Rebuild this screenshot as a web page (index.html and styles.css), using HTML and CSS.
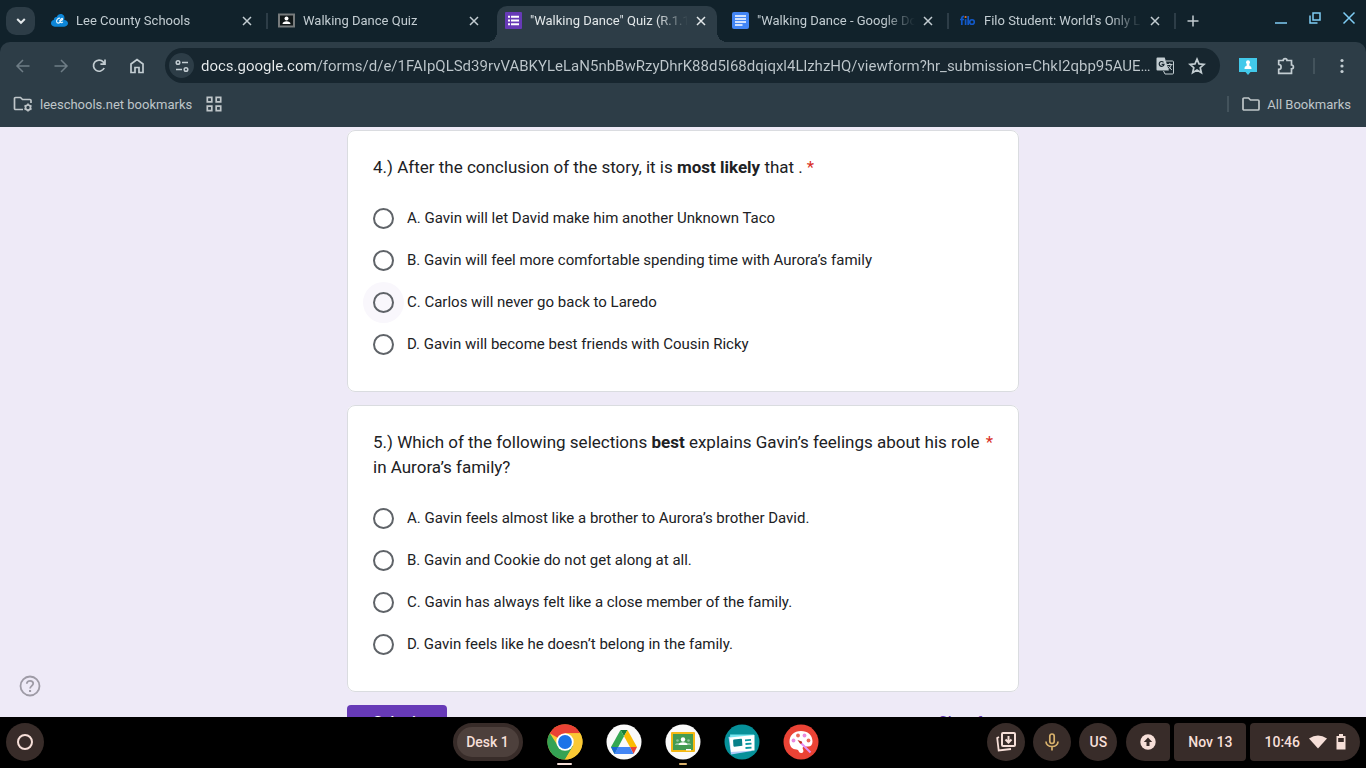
FILE: index.html
```html
<!DOCTYPE html>
<html lang="en">
<head>
<meta charset="utf-8">
<title>"Walking Dance" Quiz (R.1.1)</title>
<link rel="stylesheet" href="styles.css">
</head>
<body>
<header class="browser">
  <div class="tabstrip">
    <button class="tab-search" aria-label="Search tabs"><svg width="12" height="12" viewBox="0 0 12 12"><path d="M2.2 4 6 7.8 9.8 4" class="line bold"/></svg></button>
    <nav class="tabs">
      <div class="tab divided">
        <svg class="favicon" viewBox="0 0 18 18"><path d="M4 15.500C1.500 15.500 0 14 0 12c0-2 1.300-3.300 3-3.500C2.800 6.500 4 5 6 5.200 7 2.500 10 1.300 12.300 2.600c1.700 1 2.200 2.600 1.900 4.200l-.2 1.700c2.300.2 4 1.500 4 3.500s-1.500 3.500-4 3.500z" fill="#0d86d8"/><path d="M9.500 6.500C7 6.500 5.500 8.500 6 10.500c.5 1.800 2.600 1.600 3.500.2M8.500 9.500c2 0 4-1 3.800-2.300-.3-1.300-2.500.3-2.400 2.600.1 2 1.900 1.700 2.600.5" fill="none" stroke="#e4f5ff" stroke-width="1.300"/></svg>
        <a class="tab-title" href="#">Lee County Schools</a>
        <button class="tab-close" aria-label="Close tab"><svg viewBox="0 0 10 10"><path d="M1 1l8 8M9 1 1 9" class="line"/></svg></button>
      </div>
      <div class="tab">
        <svg class="favicon" viewBox="0 0 17 17"><path d="M0 1.500h17v14H0z" fill="#777b7c"/><path d="M2 3.500h13v10H2z" fill="#111718"/><circle cx="8.500" cy="6.500" r="2" fill="#fff"/><path d="M4.500 12c0-2 2-2.800 4-2.800s4 .8 4 2.800z" fill="#fff"/></svg>
        <a class="tab-title" href="#">Walking Dance Quiz</a>
        <button class="tab-close" aria-label="Close tab"><svg viewBox="0 0 10 10"><path d="M1 1l8 8M9 1 1 9" class="line"/></svg></button>
      </div>
      <div class="tab active">
        <svg class="favicon" viewBox="0 0 17 17"><rect width="17" height="17" rx="1" fill="#673ab7"/><path d="M6 4.800h8M6 8.500h8M6 12.200h8" stroke="#fff" stroke-width="2"/><path d="M3 4.800h2M3 8.500h2M3 12.200h2" stroke="#fff" stroke-width="2"/></svg>
        <a class="tab-title" href="#">"Walking Dance" Quiz (R.1.1</a>
        <button class="tab-close" aria-label="Close tab"><svg viewBox="0 0 10 10"><path d="M1 1l8 8M9 1 1 9" class="line"/></svg></button>
      </div>
      <div class="tab divided">
        <svg class="favicon" viewBox="0 0 17 17"><rect width="17" height="17" rx="2" fill="#4285f4"/><path d="M3 4h11M3 7h11M3 10h11M3 13h7.500" stroke="#fff" stroke-width="1.600"/></svg>
        <a class="tab-title" href="#">"Walking Dance - Google Do</a>
        <button class="tab-close" aria-label="Close tab"><svg viewBox="0 0 10 10"><path d="M1 1l8 8M9 1 1 9" class="line"/></svg></button>
      </div>
      <div class="tab divided">
        <svg class="favicon" viewBox="0 0 17 17"><path d="M2.800 13V6.500c0-1.500.7-2.200 2.200-2.200M1 7.500h4M6.600 7.200V13M9.200 4v9" fill="none" stroke="#1259c9" stroke-width="1.700"/><circle cx="13" cy="10" r="2.300" fill="none" stroke="#1259c9" stroke-width="1.600"/><circle cx="6.600" cy="5" r="1.100" fill="#e8792b"/></svg>
        <a class="tab-title" href="#">Filo Student: World's Only L</a>
        <button class="tab-close" aria-label="Close tab"><svg viewBox="0 0 10 10"><path d="M1 1l8 8M9 1 1 9" class="line"/></svg></button>
      </div>
    </nav>
    <button class="new-tab" aria-label="New tab"><svg width="12" height="12" viewBox="0 0 12 12"><path d="M6 .5v11M.5 6h11" class="line"/></svg></button>
    <div class="window-controls">
      <button aria-label="Minimize"><svg width="14" height="14" viewBox="0 0 14 14"><path d="M1 12h12" class="line"/></svg></button>
      <button aria-label="Restore"><svg width="14" height="14" viewBox="0 0 14 14"><path d="M5 2h7v7H5zM2 4.500V12h7.500" class="line"/></svg></button>
      <button aria-label="Close"><svg width="14" height="14" viewBox="0 0 14 14"><path d="M1.500 1.500l11 11M12.500 1.500l-11 11" class="line"/></svg></button>
    </div>
  </div>

  <div class="chrome-body">
    <div class="toolbar">
      <button class="tool dim" aria-label="Back"><svg width="16" height="16" viewBox="0 0 16 16"><path d="M14.500 8H2M8 2 2 8l6 6" class="line"/></svg></button>
      <button class="tool dim" aria-label="Forward"><svg width="16" height="16" viewBox="0 0 16 16"><path d="M1.500 8H14M8 2l6 6-6 6" class="line"/></svg></button>
      <button class="tool" aria-label="Reload"><svg width="16" height="16" viewBox="0 0 16 16"><path d="M13.200 10a5.600 5.600 0 1 1-1-6.200L14 5.600M14 1.500v4.600H9.400" class="line mid"/></svg></button>
      <button class="tool" aria-label="Home"><svg width="16" height="16" viewBox="0 0 16 16"><path d="M2 14.500V6l6-4.500L14 6v8.500h-4V9.500H6v5z" class="line mid"/></svg></button>
      <div class="omnibox">
        <button class="site-info" aria-label="View site information"><svg width="14" height="14" viewBox="0 0 14 14"><circle cx="3" cy="3.500" r="1.800" class="line"/><circle cx="11" cy="10.500" r="1.800" class="line"/><path d="M7 3.500h6M1 10.500h6" class="line"/></svg></button>
        <input class="url" type="text" aria-label="Address" value="docs.google.com/forms/d/e/1FAIpQLSd39rvVABKYLeLaN5nbBwRzyDhrK88d5I68dqiqxl4LlzhzHQ/viewform?hr_submission=ChkI2qbp95AUE…">
        <button class="omni-action" aria-label="Translate"><svg width="18" height="18" viewBox="0 0 18 18"><path d="M1.500.5h7.200l4.200 13H1.500A1 1 0 0 1 .5 12.500v-11a1 1 0 0 1 1-1z" fill="#c3cdd2"/><path d="M7.500 5.400A2.400 2.400 0 1 0 8 7.300H5.600" fill="none" stroke="#17262f" stroke-width="1.200"/><path d="M10 4h6.500a1 1 0 0 1 1 1v11a1 1 0 0 1-1 1H9l-1.500-3" fill="none" stroke="#c3cdd2"/><path d="M11 7.500h5.500M13.800 6v1.500M15.300 7.500c-.5 2.500-2 4-3.700 5M12.300 9l3.500 4" fill="none" stroke="#c3cdd2"/></svg></button>
        <button class="omni-action" aria-label="Bookmark this tab"><svg width="18" height="18" viewBox="0 0 18 18"><path d="M9 2.200l2 4.700 5 .5-3.800 3.300 1.200 5L9 13l-4.400 2.700 1.200-5L2 7.400l5-.5z" class="line mid"/></svg></button>
      </div>
      <button class="tool" aria-label="Classroom extension"><svg width="18" height="18" viewBox="0 0 18 18"><path d="M0 1h18v14h-6.500L9 18l-2.500-3H0z" fill="#42c9ea"/><circle cx="9" cy="5.300" r="2" fill="#fff"/><path d="M7.800 6.500h2.400l.3 2.500c1.500.3 2 1 2 3h-7c0-2 .5-2.700 2-3z" fill="#fff"/></svg></button>
      <button class="tool" aria-label="Extensions"><svg width="18" height="18" viewBox="0 0 18 18"><path d="M1.700 3.500h4.500a1.900 1.900 0 0 1 3.800 0h4.500V8a1.900 1.900 0 0 1 0 3.800v4.500H1.700v-4a2.300 2.300 0 0 0 0-4.800z" class="line mid"/></svg></button>
      <span class="rule"></span>
      <button class="tool" aria-label="Menu"><svg width="16" height="16" viewBox="0 0 16 16"><g fill="currentColor"><circle cx="8" cy="2.500" r="1.600"/><circle cx="8" cy="8" r="1.600"/><circle cx="8" cy="13.500" r="1.600"/></g></svg></button>
    </div>
    <div class="bookmarks">
      <button class="bookmark"><svg width="20" height="18" viewBox="0 0 20 18"><path d="M10 14.500H2.500a1 1 0 0 1-1-1v-10a1 1 0 0 1 1-1h5l2 2H17a1 1 0 0 1 1 1V8" class="line mid"/><circle cx="15" cy="12.500" r="2.500" class="line mid"/><path d="M15 8.500V10M15 15v1.500M11.500 10.500l1.300.8M17.200 13.700l1.300.8M11.500 14.500l1.300-.8M17.200 11.300l1.300-.8" class="line mid"/></svg>leeschools.net bookmarks</button>
      <button class="bookmark" aria-label="Apps"><svg width="16" height="16" viewBox="0 0 16 16"><path d="M1.300 1.300h4.500v4.500H1.300zM10.200 1.300h4.500v4.500h-4.500zM1.300 10.200h4.500v4.500H1.300zM10.200 10.200h4.500v4.500h-4.500z" class="line mid"/></svg></button>
      <span class="rule push"></span>
      <button class="bookmark"><svg width="18" height="14" viewBox="0 0 18 14"><path d="M1 2a1 1 0 0 1 1-1h4.500l2 2H16a1 1 0 0 1 1 1v8a1 1 0 0 1-1 1H2a1 1 0 0 1-1-1z" class="line mid"/></svg>All Bookmarks</button>
    </div>
  </div>
</header>

<main class="page">
  <form class="quiz">
    <fieldset class="card" aria-labelledby="q4">
      <div class="question" id="q4"><span>4.) After the conclusion of the story, it is <b>most likely</b> that .</span><span class="required">*</span></div>
      <label class="option"><input type="radio" name="q4">A. Gavin will let David make him another Unknown Taco</label>
      <label class="option"><input type="radio" name="q4">B. Gavin will feel more comfortable spending time with Aurora’s family</label>
      <label class="option"><input type="radio" name="q4" class="hovered">C. Carlos will never go back to Laredo</label>
      <label class="option"><input type="radio" name="q4">D. Gavin will become best friends with Cousin Ricky</label>
    </fieldset>
    <fieldset class="card" aria-labelledby="q5">
      <div class="question" id="q5"><span>5.) Which of the following selections <b>best</b> explains Gavin’s feelings about his role in Aurora’s family?</span><span class="required">*</span></div>
      <label class="option"><input type="radio" name="q5">A. Gavin feels almost like a brother to Aurora’s brother David.</label>
      <label class="option"><input type="radio" name="q5">B. Gavin and Cookie do not get along at all.</label>
      <label class="option"><input type="radio" name="q5">C. Gavin has always felt like a close member of the family.</label>
      <label class="option"><input type="radio" name="q5">D. Gavin feels like he doesn’t belong in the family.</label>
    </fieldset>
    <div class="actions">
      <button type="button" class="submit">Submit</button>
      <button type="reset" class="clear">Clear form</button>
    </div>
  </form>
  <button class="help" aria-label="Help"><svg width="22" height="22" viewBox="0 0 22 22"><circle cx="11" cy="11" r="9.500" fill="none" stroke="currentColor" stroke-width="1.800"/><path d="M7.800 8.800c0-1.900 1.400-3 3.200-3s3.200 1.200 3.200 2.800c0 2.200-3.100 2.500-3.100 5" fill="none" stroke="currentColor" stroke-width="1.800"/><path d="M10 15h2.100v2H10z" fill="currentColor"/></svg></button>
</main>

<footer class="shelf">
  <div class="shelf-side">
    <button class="round" aria-label="Launcher"><svg width="18" height="18" viewBox="0 0 18 18"><circle cx="9" cy="9" r="7" fill="none" stroke="currentColor" stroke-width="2"/></svg></button>
  </div>
  <button class="desk">Desk 1</button>
  <nav class="apps">
    <button class="app running" aria-label="Chrome"><svg viewBox="0 0 36 36"><circle cx="18" cy="18" r="17.500" fill="#fbc934"/><path d="M18 18 2.800 9.200A17.500 17.500 0 0 1 33.200 9.200L18 9.500z" fill="#e94235"/><path d="M2.800 9.200A17.500 17.500 0 0 0 18 35.500l8-13.300L18 18l-7 4z" fill="#34a253"/><path d="M18 9.300h15.200A17.500 17.500 0 0 1 18 35.500l8-13.200z" fill="#fbc934"/><circle cx="18" cy="18" r="8.700" fill="#fff"/><circle cx="18" cy="18" r="6.900" fill="#1a73e8"/></svg></button>
    <button class="app" aria-label="Drive"><svg viewBox="0 0 36 36"><circle cx="18" cy="18" r="17.500" fill="#fafafa"/><path d="M14.500 6h7L18 12.300z" fill="#188038"/><path d="M14.500 6 18 12.300 8.500 30 5 23z" fill="#34a853"/><path d="M21.500 6 31 23h-7L18 12.300z" fill="#fbbc04"/><path d="M24 23h7l-3.500 7z" fill="#ea4335"/><path d="M12 23h12l3.500 7h-19z" fill="#4285f4"/><path d="M5 23h7l-3.500 7z" fill="#1967d2"/></svg></button>
    <button class="app idle" aria-label="Classroom"><svg viewBox="0 0 36 36"><circle cx="18" cy="18" r="17.500" fill="#fafafa"/><rect x="6" y="8" width="24" height="20" rx="1" fill="#f5b914"/><path d="M8 10h20v16H8z" fill="#449b52"/><g fill="#8fc39a"><circle cx="12.500" cy="16.500" r="1.300"/><circle cx="23.500" cy="16.500" r="1.300"/><path d="M10 21c0-1.500 1.500-2 3-2h10c1.500 0 3 .5 3 2z"/></g><circle cx="18" cy="15.500" r="2.200" fill="#fff"/><path d="M13.500 21c0-2 2.500-2.700 4.500-2.700s4.500.7 4.500 2.700zM21 25h5v1.500h-5z" fill="#fff"/></svg></button>
    <button class="app" aria-label="Screencast"><svg viewBox="0 0 36 36"><circle cx="18" cy="18" r="17.500" fill="#069099"/><path d="m4.500 13 4-1L28 27 7 30.500z" fill="#aecbfa"/><path d="M6 10.500h24v10L7 24z" fill="#76e5ef"/><path d="m5.500 13.500 25-2.500v15.500L7 28z" fill="#fff"/><path d="M10 15.500l7-.8c.7 0 1 .3 1 1l.4 6-8 1c-.6 0-.9-.3-1-1l-.3-5c0-.7.3-1.100.9-1.200z" fill="#07818a"/><path d="m21 16.300 6-.4M21.500 20l6-.4M21.500 24l6-.4" stroke="#0a98a2" stroke-width="1.800"/></svg></button>
    <button class="app" aria-label="Canvas"><svg viewBox="0 0 36 36"><circle cx="18" cy="18" r="17.500" fill="#ea4335"/><path d="M18 7C11 7 6.500 11.500 6.500 17.500c0 5 3 8 7 8 2.500 0 2 3.500 4.500 3.500s3-2 1.800-4c-.6-1.500.2-2.500 2-2.500h3.200c3 0 4.500-2 4.500-5C29.500 11 24.500 7 18 7z" fill="#fff"/><g fill="#e98add"><circle cx="10.500" cy="16.500" r="1.900"/><circle cx="21.500" cy="11.500" r="1.900"/></g><g fill="#ea6a5c"><circle cx="15" cy="11.500" r="1.900"/><circle cx="25.500" cy="16.500" r="1.900"/></g><path d="m18 19 9.500 9.500" stroke="#e48df2" stroke-width="2"/><path d="m14.500 16 4.300 1.500c1 1.500-.5 2.700-1.800 2z" fill="#c52d25"/></svg></button>
  </nav>
  <div class="shelf-side tray">
    <div class="rounds">
      <button class="round" aria-label="Tote"><svg width="20" height="20" viewBox="0 0 20 20"><rect x="6" y="1" width="13" height="13" rx="1" fill="none" stroke="currentColor" stroke-width="2"/><path d="M12.500 4v6M9.500 7.500l3 3 3-3" fill="none" stroke="currentColor" stroke-width="2"/><path d="M3 5 1.200 6l1.500 12.500L15 17" fill="none" stroke="currentColor" stroke-width="1.800"/></svg></button>
      <button class="round mic" aria-label="Dictation"><svg width="20" height="20" viewBox="0 0 20 20"><rect x="7.800" y="2" width="4.400" height="9.500" rx="2.200" fill="none" stroke="currentColor" stroke-width="1.700"/><path d="M4 9.500c0 3 2.500 5 6 5s6-2 6-5M10 14.500V18.500" fill="none" stroke="currentColor" stroke-width="1.700"/></svg></button>
      <button class="round">US</button>
    </div>
    <div class="status">
      <button class="pill first" aria-label="Update"><svg width="16" height="16" viewBox="0 0 16 16"><circle cx="8" cy="8" r="7.700" fill="currentColor"/><path d="M8 3.500 3.800 8h2.700v4h3V8h2.700z" fill="#382c29"/></svg></button>
      <button class="pill">Nov 13</button>
      <button class="pill last">10:46<svg width="18" height="14" viewBox="0 0 18 14"><path d="M0 3.500Q9-2.500 18 3.500L9 13.500z" fill="currentColor"/></svg><svg width="10" height="16" viewBox="0 0 10 16"><path fill-rule="evenodd" d="M3 0h4v2h2.500v13.500h-9V2H3zM2.200 4v4h5.600V4z" fill="currentColor"/></svg></button>
    </div>
  </div>
</footer>
</body>
</html>
```
FILE: styles.css
```css
* { box-sizing: border-box; }

body {
  margin: 0;
  height: 100vh;
  display: flex;
  flex-direction: column;
  overflow: hidden;
  background: #000;
  font-family: Roboto, "Liberation Sans", sans-serif;
}

button {
  border: 0;
  padding: 0;
  background: none;
  color: inherit;
  font: inherit;
  display: inline-flex;
  align-items: center;
  justify-content: center;
  flex: none;
}

svg { display: block; flex: none; }

.line { fill: none; stroke: currentColor; stroke-width: 1.5; }
.line.mid { stroke-width: 1.7; }
.line.bold { stroke-width: 2; }

/* Browser frame */
.browser { background: #11222b; color: #c3cdd2; font-size: 13px; }

.tabstrip { display: flex; align-items: center; height: 42px; padding: 0 10px 0 6px; }

.tab-search { width: 29px; height: 28px; border-radius: 10px; background: #2d3d47; color: #e3e8ea; }

.tabs { display: flex; gap: 7px; margin-left: 8px; align-self: stretch; min-width: 0; }

.tab {
  position: relative;
  display: flex;
  align-items: center;
  flex: 0 1 220px;
  width: 220px;
  min-width: 0;
  margin-top: 6px;
  padding: 0 8px 7px 8px;
}

.tab.divided::after {
  content: "";
  position: absolute;
  right: -5px;
  top: 7px;
  width: 2px;
  height: 16px;
  background: #2d3d47;
}

.tab.active { background: #2d3d47; border-radius: 10px 10px 0 0; color: #e3e8ea; }

.tab.active::before {
  content: "";
  position: absolute;
  bottom: 0;
  left: -10px;
  right: -10px;
  height: 10px;
  background:
    radial-gradient(circle at 0 0, transparent 10px, #2d3d47 10px) left / 10px 10px no-repeat,
    radial-gradient(circle at 100% 0, transparent 10px, #2d3d47 10px) right / 10px 10px no-repeat;
}

.favicon { width: 17px; height: 17px; }

.tab-title {
  flex: 1;
  min-width: 0;
  margin: 0 5px 0 8px;
  overflow: hidden;
  white-space: nowrap;
  color: inherit;
  text-decoration: none;
  mask-image: linear-gradient(to right, #000 calc(100% - 32px), transparent);
}

.tab-close { width: 16px; height: 16px; }
.tab-close svg { width: 10px; height: 10px; }

.new-tab { width: 28px; height: 28px; margin-left: 8px; }

.window-controls { display: flex; gap: 20px; margin: 0 0 6px auto; color: #7fcdf5; }

.chrome-body { background: #2d3d47; border-radius: 10px 10px 0 0; }

.toolbar { display: flex; align-items: center; height: 47px; padding: 0 14px 0 13px; gap: 18px; }

.tool { width: 20px; height: 28px; }
.tool.dim { color: #6e7d86; }

.omnibox {
  flex: 1;
  min-width: 0;
  display: flex;
  align-items: center;
  height: 35px;
  padding: 0 14px 0 4px;
  border-radius: 18px;
  background: #17262f;
}

.site-info { width: 25px; height: 25px; border-radius: 50%; background: #2d3d47; }

.url {
  flex: 1;
  min-width: 0;
  margin: 0 4px 0 7px;
  padding: 0;
  border: 0;
  outline: 0;
  font: 15px Roboto, "Liberation Sans", sans-serif;
  color: transparent;
  background: linear-gradient(to right, #e8ecee 115px, #bfc8cd 115px);
  background-clip: text;
}

.omni-action { width: 18px; height: 28px; }
.omni-action + .omni-action { margin-left: 14px; }

.rule { width: 2px; height: 16px; margin: 0 -1px; background: #43535c; }
.rule.push { margin-left: auto; }

.bookmarks { display: flex; align-items: center; height: 38px; padding: 0 15px 8px 13px; gap: 14px; }
.bookmark { gap: 7px; color: #bfc6c9; }

/* Form page */
.page {
  position: relative;
  flex: 1;
  min-height: 0;
  overflow: hidden;
  padding-top: 3px;
  background: #eeeaf7;
  color: #202124;
}

.quiz {
  display: flex;
  flex-direction: column;
  gap: 13px;
  max-width: 672px;
  margin: 0 auto;
}

.card {
  margin: 0;
  min-width: 0;
  padding: 24px 25px 26px;
  border: 1px solid #dadce0;
  border-radius: 8px;
  background: #fff;
}

.question {
  display: flex;
  gap: 4px;
  margin-bottom: 17px;
  font-size: 17px;
  line-height: 25px;
}

.required { color: #d93025; }

.option { display: flex; align-items: center; gap: 13px; height: 42px; font-size: 15px; }

.option input {
  appearance: none;
  flex: none;
  width: 21px;
  height: 21px;
  margin: 0;
  border: 2px solid #5f6368;
  border-radius: 50%;
}

.option .hovered { background: #f9f7fc; box-shadow: 0 0 0 10px #f9f7fc; }

.actions { display: flex; justify-content: space-between; font-size: 15px; font-weight: 500; }
.submit { width: 100px; height: 34px; border-radius: 4px; background: #673ab7; color: #fff; }
.clear { height: 34px; padding: 0 10px; color: #673ab7; }

.help { position: absolute; left: 19px; bottom: 20px; color: #9e9ba6; }

/* Shelf */
.shelf {
  display: flex;
  align-items: center;
  height: 51px;
  padding: 0 6px 1px;
  background: #000;
  color: #f6dfd8;
  font-size: 14px;
  font-weight: 500;
}

.shelf-side { flex: 1; display: flex; }

.round { width: 38px; height: 38px; border-radius: 50%; background: #382c29; }
.mic { color: #d9b26c; }

.desk {
  width: 70px;
  height: 38px;
  margin-right: 24px;
  border: 4px solid #382c29;
  border-radius: 19px;
  background: #4d403c;
}

.apps { display: flex; gap: 23px; margin-right: 95px; }
.app { position: relative; width: 36px; height: 36px; }
.app svg { width: 36px; height: 36px; }

.app.running::after,
.app.idle::after {
  content: "";
  position: absolute;
  bottom: -5px;
  width: 15px;
  height: 2px;
  border-radius: 1px;
  background: #f6dfd8;
}

.app.idle::after { width: 8px; background: #d9b26c; }

.tray { justify-content: flex-end; gap: 9px; }
.rounds { display: flex; gap: 8px; }
.status { display: flex; gap: 4px; }

.pill { height: 38px; padding: 0 14px; gap: 9px; border-radius: 4px; background: #382c29; }
.pill.first { border-radius: 19px 4px 4px 19px; }
.pill.last { border-radius: 4px 19px 19px 4px; }
```
